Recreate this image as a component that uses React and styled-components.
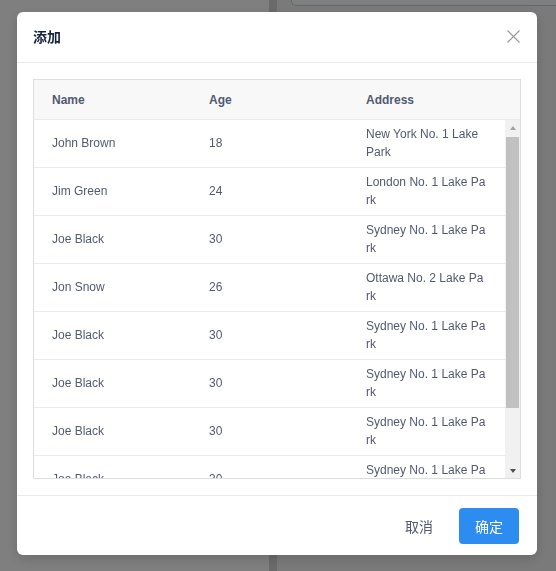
import styled, { createGlobalStyle } from 'styled-components';

const GlobalStyle = createGlobalStyle`
  html, body {
    margin: 0;
    padding: 0;
    height: 100%;
    overflow: hidden;
    font-family: "Liberation Sans", Arial, "Noto Sans CJK SC", sans-serif;
  }
  #root {
    height: 100%;
  }
`;

const rows = [
  { name: 'John Brown', age: 18, address: 'New York No. 1 Lake Park' },
  { name: 'Jim Green', age: 24, address: 'London No. 1 Lake Park' },
  { name: 'Joe Black', age: 30, address: 'Sydney No. 1 Lake Park' },
  { name: 'Jon Snow', age: 26, address: 'Ottawa No. 2 Lake Park' },
  { name: 'Joe Black', age: 30, address: 'Sydney No. 1 Lake Park' },
  { name: 'Joe Black', age: 30, address: 'Sydney No. 1 Lake Park' },
  { name: 'Joe Black', age: 30, address: 'Sydney No. 1 Lake Park' },
  { name: 'Joe Black', age: 30, address: 'Sydney No. 1 Lake Park' },
  { name: 'Joe Black', age: 30, address: 'Sydney No. 1 Lake Park' },
];

const ROW_H = 48;
const VIEW_H = 359;
const TRACK_H = VIEW_H - 32;

// page sitting behind the mask
const Page = styled.div`
  display: flex;
  height: 100%;
  background: #fff;
`;

const Side = styled.div`
  width: 269px;
  background: #ffffff;
`;

const Divider = styled.div`
  width: 8px;
  background: #d6d6d6;
`;

const Main = styled.div`
  flex: 1;
  padding: 0 0 0 14px;
  background: #f5f5f5;
`;

const Card = styled.div`
  height: 5px;
  border: 1px solid #c3d0de;
  border-top: none;
  border-right: none;
  border-radius: 0 0 0 5px;
  background: #fdfeff;
`;

const Mask = styled.div`
  position: fixed;
  inset: 0;
  background: rgba(0, 0, 0, 0.5);
  padding: 12px 0 0 17px;
`;

const Modal = styled.div`
  width: 520px;
  background: #fff;
  border-radius: 6px;
  box-shadow: 0 4px 12px rgba(0, 0, 0, 0.15);
  display: flex;
  flex-direction: column;
`;

const Header = styled.div`
  display: flex;
  align-items: center;
  justify-content: space-between;
  height: 51px;
  padding: 0 17px 2px 16px;
  box-sizing: border-box;
  border-bottom: 1px solid #e8eaec;
`;

const Title = styled.div`
  font-family: "Noto Sans CJK SC", sans-serif;
  font-size: 14px;
  font-weight: 700;
  color: #17233d;
  line-height: 20px;
`;

const Close = styled.button`
  border: none;
  background: none;
  padding: 0;
  width: 13px;
  height: 13px;
  display: flex;
  cursor: pointer;
`;

const Body = styled.div`
  padding: 16px;
`;

const Table = styled.div`
  border: 1px solid #dcdee2;
  height: 400px;
  box-sizing: border-box;
  display: flex;
  flex-direction: column;
  font-size: 12px;
  color: #515a6e;
`;

const HeadRow = styled.div`
  display: grid;
  grid-template-columns: repeat(3, 157px) 1fr;
  height: 40px;
  flex-shrink: 0;
  box-sizing: border-box;
  background: #f8f8f9;
  border-bottom: 1px solid #e8eaec;
  font-weight: 700;
`;

const HeadCell = styled.div`
  display: flex;
  align-items: center;
  padding: 0 18px;
`;

const BodyWrap = styled.div`
  flex: 1;
  display: flex;
  min-height: 0;
`;

const Scroll = styled.div`
  flex: 1;
  overflow-y: auto;
  scrollbar-width: none;
`;

const Row = styled.div`
  display: grid;
  grid-template-columns: repeat(3, 157px);
  height: ${ROW_H}px;
  box-sizing: border-box;
  border-bottom: 1px solid #e8eaec;
`;

const Cell = styled.div`
  display: flex;
  align-items: center;
  padding: 0 18px 2px;
  line-height: 18px;
  word-break: break-all;
`;

const ScrollBar = styled.div`
  width: 15px;
  display: flex;
  flex-direction: column;
  background: #f1f1f1;
`;

const ArrowBtn = styled.div`
  height: 16px;
  display: flex;
  align-items: center;
  justify-content: center;
  flex-shrink: 0;

  &::after {
    content: '';
    width: 0;
    height: 0;
    border-left: 3.5px solid transparent;
    border-right: 3.5px solid transparent;
    ${(p) =>
      p.down
        ? 'border-top: 4px solid #505050; margin-top: 1px;'
        : 'border-bottom: 4px solid #a3a3a3; margin-top: -1px;'}
  }
`;

const Track = styled.div`
  flex: 1;
  padding: 1px 1px 0;
`;

const Thumb = styled.div`
  background: #c1c1c1;
`;

const Footer = styled.div`
  display: flex;
  justify-content: flex-end;
  gap: 10px;
  padding: 12px 18px 11px;
  border-top: 1px solid #e8eaec;
`;

const Button = styled.button`
  height: 36px;
  padding: 0 16px;
  border-radius: 4px;
  border: none;
  font-family: "Noto Sans CJK SC", sans-serif;
  font-size: 14px;
  line-height: 20px;
  cursor: pointer;
  background: ${(p) => (p.primary ? '#2d8cf0' : 'transparent')};
  color: ${(p) => (p.primary ? '#fff' : '#515a6e')};
`;

export default function App() {
  const thumbH = Math.round((VIEW_H / (rows.length * ROW_H)) * TRACK_H) - 1;

  return (
    <>
      <GlobalStyle />
      <Page>
        <Side />
        <Divider />
        <Main>
          <Card />
        </Main>
      </Page>
      <Mask>
        <Modal>
          <Header>
            <Title>添加</Title>
            <Close aria-label="close">
              <svg width="13" height="13" viewBox="0 0 13 13">
                <path d="M0.5 0.5L12.5 12.5M12.5 0.5L0.5 12.5" stroke="#999" strokeWidth="1.1" fill="none" />
              </svg>
            </Close>
          </Header>
          <Body>
            <Table>
              <HeadRow>
                <HeadCell>Name</HeadCell>
                <HeadCell>Age</HeadCell>
                <HeadCell>Address</HeadCell>
              </HeadRow>
              <BodyWrap>
                <Scroll>
                  {rows.map((r, i) => (
                    <Row key={i}>
                      <Cell>{r.name}</Cell>
                      <Cell>{r.age}</Cell>
                      <Cell>{r.address}</Cell>
                    </Row>
                  ))}
                </Scroll>
                <ScrollBar>
                  <ArrowBtn />
                  <Track>
                    <Thumb style={{ height: thumbH }} />
                  </Track>
                  <ArrowBtn down />
                </ScrollBar>
              </BodyWrap>
            </Table>
          </Body>
          <Footer>
            <Button>取消</Button>
            <Button primary>确定</Button>
          </Footer>
        </Modal>
      </Mask>
    </>
  );
}
